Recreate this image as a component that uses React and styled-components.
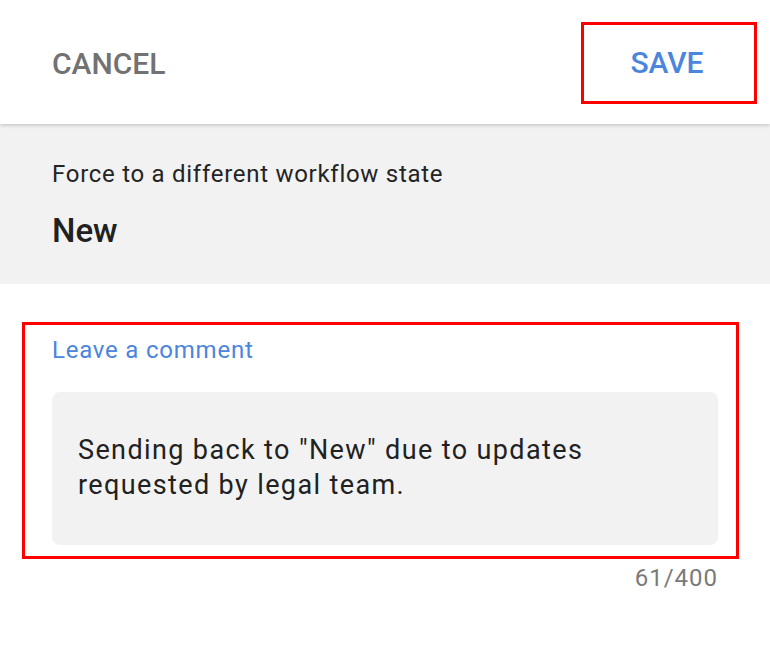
import React from "react";
import styled, { createGlobalStyle } from "styled-components";

const Global = createGlobalStyle`
  html, body { margin: 0; padding: 0; background: #ffffff; }
  body { font-family: Roboto, "Noto Sans", "Liberation Sans", sans-serif; }
  * { box-sizing: border-box; }
`;

const Page = styled.div`
  width: 770px;
  min-height: 656px;
  background: #ffffff;
`;

const Toolbar = styled.header`
  position: relative;
  z-index: 1;
  height: 124px;
  display: flex;
  align-items: center;
  justify-content: space-between;
  padding: 0 13px 0 52px;
  background: #ffffff;
  box-shadow: 0 1px 4px rgba(0, 0, 0, 0.22);
`;

const TextButton = styled.button`
  appearance: none;
  border: ${(p) => (p.$highlight ? "3px solid #ff0000" : "none")};
  background: transparent;
  padding: ${(p) => (p.$highlight ? "0 4px 0 0" : "0")};
  width: ${(p) => (p.$highlight ? "176px" : "auto")};
  height: ${(p) => (p.$highlight ? "82px" : "auto")};
  margin-top: ${(p) => (p.$highlight ? "2px" : "3px")};
  font-family: Roboto, "Liberation Sans", sans-serif;
  font-size: 30px;
  font-weight: 500;
  line-height: 36px;
  color: ${(p) => (p.$primary ? "#4a86dd" : "#727272")};
  display: flex;
  align-items: center;
  justify-content: center;
`;

const StateSection = styled.section`
  background: #f2f2f2;
  padding: 36px 52px 33px;
  display: flex;
  flex-direction: column;
  gap: 23px;
`;

const StateLabel = styled.div`
  font-size: 24px;
  line-height: 28px;
  letter-spacing: 0.72px;
  color: #242424;
`;

const StateValue = styled.div`
  font-size: 33px;
  line-height: 40px;
  font-weight: 500;
  color: #212121;
`;

const CommentSection = styled.section`
  padding: 38px 31px 0 22px;
  display: flex;
  flex-direction: column;
`;

const CommentBox = styled.div`
  border: 3px solid #ff0000;
  padding: 11px 18px 11px 27px;
  display: flex;
  flex-direction: column;
  gap: 28px;
`;

const CommentLabel = styled.label`
  font-size: 24px;
  line-height: 28px;
  letter-spacing: 0.78px;
  color: #4a86dd;
`;

const CommentInput = styled.textarea`
  display: block;
  width: 100%;
  height: 153px;
  resize: none;
  border: none;
  outline: none;
  border-radius: 8px;
  background: #f2f2f2;
  padding: 41px 100px 0 26px;
  font-family: Roboto, "Liberation Sans", sans-serif;
  font-size: 27px;
  line-height: 35px;
  letter-spacing: 1.38px;
  color: #212121;
  overflow: hidden;
`;

const Counter = styled.div`
  align-self: flex-end;
  margin: 5px 21px 0 0;
  font-size: 24px;
  line-height: 28px;
  letter-spacing: 1px;
  color: #7a7a7a;
`;

export default function App() {
  const comment = 'Sending back to "New" due to updates requested by legal team.';
  return (
    <Page>
      <Global />
      <Toolbar>
        <TextButton>CANCEL</TextButton>
        <TextButton $primary $highlight>SAVE</TextButton>
      </Toolbar>
      <StateSection>
        <StateLabel>Force to a different workflow state</StateLabel>
        <StateValue>New</StateValue>
      </StateSection>
      <CommentSection>
        <CommentBox>
          <CommentLabel htmlFor="comment">Leave a comment</CommentLabel>
          <CommentInput id="comment" defaultValue={comment} readOnly />
        </CommentBox>
        <Counter>{comment.length}/400</Counter>
      </CommentSection>
    </Page>
  );
}
